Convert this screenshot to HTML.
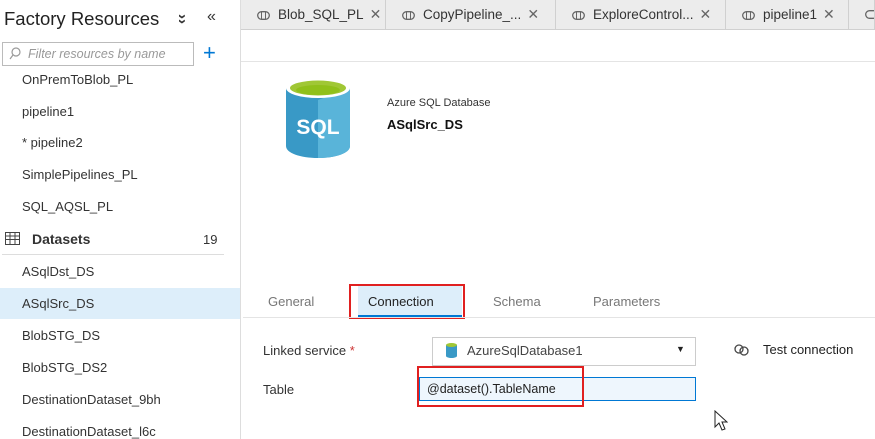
<!DOCTYPE html>
<html><head><style>
*{margin:0;padding:0;box-sizing:border-box}
body{width:875px;height:439px;overflow:hidden;background:#fff;font-family:"Liberation Sans",sans-serif;color:#333;position:relative}
.a{position:absolute}
.side{left:0;top:0;width:241px;height:439px;border-right:1px solid #ddd}
.it{position:absolute;left:22px;font-size:13px;color:#333}
.tab{position:absolute;top:0;height:30px;background:#ececec;border-right:1px solid #d0d0d0;border-bottom:1px solid #d0d0d0;font-size:13.5px;color:#333;line-height:28px;white-space:nowrap;overflow:hidden}
.ic{display:inline-block;width:13px;height:9px;margin:0 8px 0 16px;vertical-align:middle}
.x{color:#666;font-size:14px;margin-left:6px}
</style></head><body>
<div class="a side">
 <div class="a" style="left:4px;top:8px;font-size:18.5px;color:#222">Factory Resources</div>
 <div class="a" style="left:180px;top:8px;font-size:15px;font-weight:bold;transform:rotate(90deg)">›</div>
 <div class="a" style="left:180px;top:13px;font-size:15px;font-weight:bold;transform:rotate(90deg)">›</div>
 <div class="a" style="left:207px;top:8px;font-size:16px">«</div>
 <div class="a" style="left:2px;top:42px;width:192px;height:24px;border:1px solid #bbb"></div>
 <svg class="a" style="left:9px;top:47px" width="12" height="13"><circle cx="7" cy="5" r="4" fill="none" stroke="#999" stroke-width="1.2"/><path d="M4 8L1 12" stroke="#999" stroke-width="1.2"/></svg>
 <div class="a" style="left:28px;top:47px;font-size:12.5px;font-style:italic;color:#999">Filter resources by name</div>
 <div class="a" style="left:203px;top:40px;font-size:22px;color:#0078d4;font-weight:300">+</div>
 <div class="it" style="top:72px">OnPremToBlob_PL</div>
 <div class="it" style="top:104px">pipeline1</div>
 <div class="it" style="top:135px">* pipeline2</div>
 <div class="it" style="top:167px">SimplePipelines_PL</div>
 <div class="it" style="top:199px">SQL_AQSL_PL</div>
 <svg class="a" style="left:5px;top:232px" width="15" height="13"><rect x="0.5" y="0.5" width="14" height="12" fill="none" stroke="#444"/><path d="M0 4h15M0 7.5h15M5 0v13M10 0v13" stroke="#444"/></svg>
 <div class="a" style="left:32px;top:231px;font-size:14px;font-weight:bold;color:#333">Datasets</div>
 <div class="a" style="left:203px;top:232px;font-size:13px">19</div>
 <div class="a" style="left:2px;top:254px;width:222px;height:1px;background:#ddd"></div>
 <div class="it" style="top:264px">ASqlDst_DS</div>
 <div class="a" style="left:0;top:288px;width:240px;height:31px;background:#ddeefa"></div>
 <div class="it" style="top:296px">ASqlSrc_DS</div>
 <div class="it" style="top:328px">BlobSTG_DS</div>
 <div class="it" style="top:360px">BlobSTG_DS2</div>
 <div class="it" style="top:392px">DestinationDataset_9bh</div>
 <div class="it" style="top:424px">DestinationDataset_l6c</div>
</div>
<div class="a" style="left:241px;top:0;width:634px;height:30px;background:#ececec;border-bottom:1px solid #d0d0d0"></div>
<div class="tab" style="left:241px;width:145px"><svg class="ic"><rect x="0.7" y="0.7" width="11.6" height="7.6" rx="3.8" fill="none" stroke="#666" stroke-width="1.3"/><path d="M4.5 1v7M8.5 1v7" stroke="#666"/></svg>Blob_SQL_PL<span class="x">✕</span></div>
<div class="tab" style="left:386px;width:170px"><svg class="ic"><rect x="0.7" y="0.7" width="11.6" height="7.6" rx="3.8" fill="none" stroke="#666" stroke-width="1.3"/><path d="M4.5 1v7M8.5 1v7" stroke="#666"/></svg>CopyPipeline_...<span class="x">✕</span></div>
<div class="tab" style="left:556px;width:170px"><svg class="ic"><rect x="0.7" y="0.7" width="11.6" height="7.6" rx="3.8" fill="none" stroke="#666" stroke-width="1.3"/><path d="M4.5 1v7M8.5 1v7" stroke="#666"/></svg>ExploreControl...<span class="x">✕</span></div>
<div class="tab" style="left:726px;width:123px"><svg class="ic"><rect x="0.7" y="0.7" width="11.6" height="7.6" rx="3.8" fill="none" stroke="#666" stroke-width="1.3"/><path d="M4.5 1v7M8.5 1v7" stroke="#666"/></svg>pipeline1<span class="x">✕</span></div>
<div class="tab" style="left:849px;width:26px"><svg class="ic"><rect x="0.7" y="0.7" width="11.6" height="7.6" rx="3.8" fill="none" stroke="#666" stroke-width="1.3"/></svg></div>
<div class="a" style="left:241px;top:61px;width:634px;height:1px;background:#e4e4e4"></div>
<svg class="a" style="left:286px;top:78px" width="64" height="80"><path d="M0 10v58c0 7 14 12 32 12s32-5 32-12V10z" fill="#3999c6"/><path d="M32 22v58c18 0 32-5 32-12V10z" fill="#59b4d9"/><ellipse cx="32" cy="10" rx="32" ry="10" fill="#fff"/><ellipse cx="32" cy="10" rx="28" ry="7.5" fill="#a0c735"/><ellipse cx="32" cy="12" rx="22" ry="5" fill="#7fba00" opacity=".5"/><text x="32" y="56" font-family="Liberation Sans" font-weight="bold" font-size="21" fill="#fff" text-anchor="middle">SQL</text></svg>
<div class="a" style="left:387px;top:97px;font-size:11px;color:#333">Azure SQL Database</div>
<div class="a" style="left:387px;top:117px;font-size:13px;font-weight:bold;color:#111">ASqlSrc_DS</div>
<div class="a" style="left:268px;top:294px;font-size:13px;color:#777">General</div>
<div class="a" style="left:358px;top:285px;width:104px;height:33px;background:#ddeefa"></div>
<div class="a" style="left:358px;top:315px;width:104px;height:3px;background:#0078d4"></div>
<div class="a" style="left:368px;top:294px;font-size:13px;color:#222">Connection</div>
<div class="a" style="left:349px;top:284px;width:116px;height:35px;border:2px solid #e02020"></div>
<div class="a" style="left:493px;top:294px;font-size:13px;color:#777">Schema</div>
<div class="a" style="left:593px;top:294px;font-size:13px;color:#777">Parameters</div>
<div class="a" style="left:243px;top:317px;width:632px;height:1px;background:#e4e4e4"></div>
<div class="a" style="left:263px;top:343px;font-size:13px;color:#333">Linked service <span style="color:#c33">*</span></div>
<div class="a" style="left:432px;top:337px;width:264px;height:29px;border:1px solid #ccc"></div>
<svg class="a" style="left:446px;top:343px" width="11" height="15"><path d="M0 2v11c0 1 2.5 2 5.5 2s5.5-1 5.5-2V2z" fill="#3999c6"/><ellipse cx="5.5" cy="2" rx="5.5" ry="2" fill="#a0c735"/></svg>
<div class="a" style="left:467px;top:343px;font-size:13px;color:#444">AzureSqlDatabase1</div>
<div class="a" style="left:676px;top:344px;font-size:9px;color:#222">▼</div>
<svg class="a" style="left:734px;top:344px" width="16" height="12"><circle cx="5" cy="5" r="4" fill="none" stroke="#444" stroke-width="1.3"/><circle cx="10" cy="7" r="4" fill="none" stroke="#444" stroke-width="1.3"/></svg>
<div class="a" style="left:763px;top:342px;font-size:13px;color:#222">Test connection</div>
<div class="a" style="left:263px;top:382px;font-size:13px;color:#333">Table</div>
<div class="a" style="left:419px;top:377px;width:277px;height:24px;border:1px solid #0078d4;background:#eef6fd"></div>
<div class="a" style="left:427px;top:382px;font-size:12.5px;color:#222">@dataset().TableName</div>
<div class="a" style="left:417px;top:366px;width:167px;height:41px;border:2px solid #e02020"></div>
<svg class="a" style="left:714px;top:410px" width="14" height="22"><path d="M1 1v16l4-4 3 7 3-1-3-7h5z" fill="#fff" stroke="#222"/></svg>
</body></html>
